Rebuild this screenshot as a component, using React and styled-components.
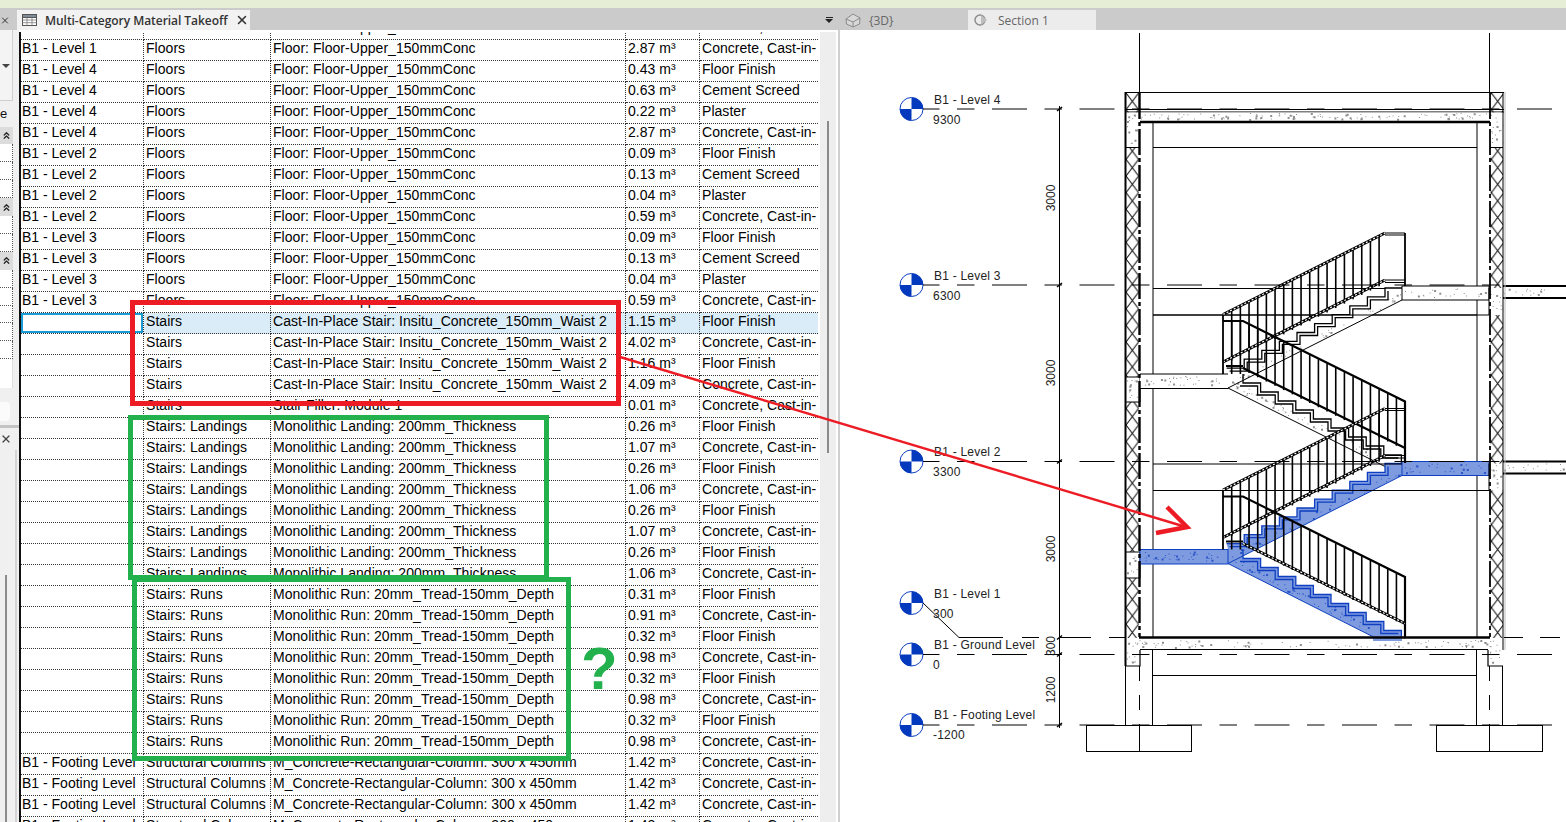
import styled, { createGlobalStyle } from 'styled-components'
import { X, ChevronsUp } from 'lucide-react'

const GlobalStyle = createGlobalStyle`
  html, body, #root {
    margin: 0;
    height: 100%;
    overflow: hidden;
    background: #fff;
  }
`

const Page = styled.div`
  position: relative;
  display: flex;
  flex-direction: column;
  width: 1566px;
  height: 822px;
  overflow: hidden;
  font-family: "Liberation Sans", Arial, sans-serif;
`

const TopStrip = styled.div`
  height: 8px;
  background: #e6efd6;
`

const TabBar = styled.div`
  display: flex;
  align-items: flex-end;
  height: 22px;
  background: #cbcbcb;
  font-family: "Open Sans", "Liberation Sans", sans-serif;
`

const DockClose = styled.div`
  display: flex;
  align-items: center;
  justify-content: flex-end;
  width: 17px;
  height: 20px;
  box-sizing: border-box;
  padding-right: 7px;
  color: #333;
`

const ActiveTab = styled.div`
  display: flex;
  align-items: center;
  width: 233px;
  height: 20px;
  box-sizing: border-box;
  padding-left: 5px;
  background: #f2f2f2;
  color: #333;
  font-size: 12px;
  font-weight: 600;
  letter-spacing: -0.05px;
  white-space: nowrap;
  svg:first-child {
    margin-right: 8px;
  }
  svg:last-child {
    margin-left: 7px;
  }
`

const TabSpacer = styled.div`
  width: 572px;
`

const TabMenu = styled.div`
  display: flex;
  flex-direction: column;
  align-items: center;
  justify-content: center;
  gap: 1px;
  width: 14px;
  height: 20px;
  &::before {
    content: '';
    width: 7px;
    height: 1px;
    background: #222;
  }
  &::after {
    content: '';
    border-left: 4px solid transparent;
    border-right: 4px solid transparent;
    border-top: 4px solid #222;
  }
`

const ViewTab = styled.div`
  display: flex;
  align-items: center;
  gap: ${(p) => p.$gap}px;
  width: ${(p) => p.$width}px;
  height: 20px;
  box-sizing: border-box;
  padding-left: ${(p) => p.$pad}px;
  background: ${(p) => (p.$open ? '#ececec' : 'transparent')};
  color: #666;
  font-size: 12px;
`

const Workspace = styled.div`
  display: flex;
  flex: 1;
  min-height: 0;
`

const Rail = styled.div`
  display: flex;
  flex-direction: column;
  flex: none;
  width: 19px;
  background: #f0f0f0;
`

const RailPanel = styled.div`
  display: flex;
  align-items: center;
  justify-content: center;
  width: 13px;
  height: 71px;
  box-sizing: border-box;
  padding-top: 2px;
  background: #f4f4f4;
  border-right: 1px solid #cfcfcf;
  border-bottom: 1px solid #cfcfcf;
  &::after {
    content: '';
    border-left: 4px solid transparent;
    border-right: 4px solid transparent;
    border-top: 4px solid #444;
  }
`

const RailLabel = styled.div`
  display: flex;
  align-items: center;
  width: 13px;
  height: 26px;
  font-size: 13px;
  color: #111;
`

const RailHeading = styled.div`
  display: flex;
  align-items: center;
  justify-content: center;
  width: 13px;
  height: 18px;
  background: #dcdcdc;
  color: #222;
`

const RailCell = styled.div`
  width: 13px;
  height: 18px;
  box-sizing: border-box;
  background: #fff;
  border-right: 1px dotted #555;
  border-bottom: 1px dotted #555;
`

const RailBlank = styled.div`
  width: 13px;
  height: 29px;
  box-sizing: border-box;
  background: #fff;
  border-right: 1px solid #dedede;
`

const RailSearch = styled.div`
  width: 10px;
  height: 19px;
  margin-top: 14px;
  background: #fbfbfb;
  border-radius: 0 4px 4px 0;
`

const RailSash = styled.div`
  height: 3px;
  margin-top: 4px;
  background: #c4c4c4;
`

const RailClose = styled.div`
  display: flex;
  align-items: center;
  height: 22px;
  padding-left: 0;
  color: #444;
`

const RailLower = styled.div`
  position: relative;
  flex: 1;
  display: flex;
  background: #f0f0f0;
`

const RailThumb = styled.div`
  width: 2px;
  height: 247px;
  margin: 125px 0 0 5px;
  background: #8c8c8c;
`

const RailEdge = styled.div`
  width: 2px;
  margin-left: 8px;
  background: #d4d4d4;
`

const Schedule = styled.div`
  flex: none;
  box-sizing: border-box;
  width: 801px;
  margin-top: 2px;
  overflow: hidden;
  border-left: 2px solid #111;
  background: #fff;
`

const RowStack = styled.div`
  margin-top: -13px;
`

const Row = styled.div`
  display: grid;
  grid-template-columns: 123px 127px 355px 74px 118px;
  height: 21px;
`

const Cell = styled.div`
  box-sizing: border-box;
  height: 21px;
  padding: 0 0 0 2px;
  overflow: hidden;
  white-space: nowrap;
  border-bottom: 1px dotted #333;
  border-right: 1px dotted #333;
  background: ${(p) => (p.$selected ? '#d9ecf8' : 'transparent')};
  box-shadow: ${(p) => (p.$focused ? 'inset 0 0 0 2px #1a9bd7' : 'none')};
  color: #000;
  font-size: 14px;
  letter-spacing: 0.04px;
  line-height: 17px;
  &:first-child {
    padding-left: 1px;
    letter-spacing: 0;
  }
  &:last-child {
    border-right: 0;
  }
`

const ScrollTrack = styled.div`
  flex: none;
  width: 16px;
  margin-top: 2px;
  background: #eeeeee;
`

const ScrollThumb = styled.div`
  width: 2px;
  height: 332px;
  margin: 89px 0 0 7px;
  background: #8a8a8a;
`

const Sash = styled.div`
  flex: none;
  width: 2px;
  margin: 0 1px 0 2px;
  background: #cfcfcf;
`

const DrawingPane = styled.div`
  flex: 1;
  margin-top: 2px;
  background: #fff;
  svg {
    display: block;
  }
`

const LevelText = styled.text`
  font-family: "Liberation Sans", Arial, sans-serif;
  font-size: 12px;
  letter-spacing: 0.22px;
  fill: #222;
`

const DimText = styled.text`
  font-family: "Liberation Sans", Arial, sans-serif;
  font-size: 12px;
  fill: #222;
`

const MarkBox = styled.div`
  position: absolute;
  left: ${(p) => p.$x}px;
  top: ${(p) => p.$y}px;
  width: ${(p) => p.$w}px;
  height: ${(p) => p.$h}px;
  box-sizing: border-box;
  border: 5px solid ${(p) => p.$color};
`

const QuestionMark = styled.div`
  position: absolute;
  left: 581px;
  top: 635px;
  color: #22b14c;
  font-size: 60px;
  font-weight: 700;
  line-height: 68px;
`

const ArrowLayer = styled.svg`
  position: absolute;
  left: 0;
  top: 0;
  pointer-events: none;
`

const FF = 'Floor Finish'
const CC = 'Concrete, Cast-in-'
const CS = 'Cement Screed'
const PL = 'Plaster'
const FLOOR = 'Floor: Floor-Upper_150mmConc'
const STAIR = 'Cast-In-Place Stair: Insitu_Concrete_150mm_Waist 2'
const LANDING = 'Monolithic Landing: 200mm_Thickness'
const RUN = 'Monolithic Run: 20mm_Tread-150mm_Depth'
const COLUMN = 'M_Concrete-Rectangular-Column: 300 x 450mm'

const row = (level, category, family, area, material) => ({ level, category, family, area, material })

const rows = [
  row('B1 - Level 1', 'Floors', FLOOR, '0.59', CC),
  row('B1 - Level 1', 'Floors', FLOOR, '2.87', CC),
  row('B1 - Level 4', 'Floors', FLOOR, '0.43', FF),
  row('B1 - Level 4', 'Floors', FLOOR, '0.63', CS),
  row('B1 - Level 4', 'Floors', FLOOR, '0.22', PL),
  row('B1 - Level 4', 'Floors', FLOOR, '2.87', CC),
  row('B1 - Level 2', 'Floors', FLOOR, '0.09', FF),
  row('B1 - Level 2', 'Floors', FLOOR, '0.13', CS),
  row('B1 - Level 2', 'Floors', FLOOR, '0.04', PL),
  row('B1 - Level 2', 'Floors', FLOOR, '0.59', CC),
  row('B1 - Level 3', 'Floors', FLOOR, '0.09', FF),
  row('B1 - Level 3', 'Floors', FLOOR, '0.13', CS),
  row('B1 - Level 3', 'Floors', FLOOR, '0.04', PL),
  row('B1 - Level 3', 'Floors', FLOOR, '0.59', CC),
  row('', 'Stairs', STAIR, '1.15', FF),
  row('', 'Stairs', STAIR, '4.02', CC),
  row('', 'Stairs', STAIR, '1.16', FF),
  row('', 'Stairs', STAIR, '4.09', CC),
  row('', 'Stairs', 'Stair Filler: Module 1', '0.01', CC),
  ...['0.26', '1.07', '0.26', '1.06', '0.26', '1.07', '0.26', '1.06'].map((a, i) =>
    row('', 'Stairs: Landings', LANDING, a, i % 2 ? CC : FF)),
  ...['0.31', '0.91', '0.32', '0.98', '0.32', '0.98', '0.32', '0.98'].map((a, i) =>
    row('', 'Stairs: Runs', RUN, a, i % 2 ? CC : FF)),
  row('B1 - Footing Level', 'Structural Columns', COLUMN, '1.42', CC),
  row('B1 - Footing Level', 'Structural Columns', COLUMN, '1.42', CC),
  row('B1 - Footing Level', 'Structural Columns', COLUMN, '1.42', CC),
  row('B1 - Footing Level', 'Structural Columns', COLUMN, '1.42', CC),
]

const SELECTED_ROW = 14

const levels = [
  { name: 'B1 - Level 4', value: '9300', y: 109, nameY: 104, valueY: 124, x2: 1558 },
  { name: 'B1 - Level 3', value: '6300', y: 285, nameY: 280, valueY: 300, x2: 1500 },
  { name: 'B1 - Level 2', value: '3300', y: 461.5, nameY: 456, valueY: 476, x2: 1500 },
  { name: 'B1 - Level 1', value: '300', y: 603, nameY: 598, valueY: 618, elbow: 637.5, x2: 1566 },
  { name: 'B1 - Ground Level', value: '0', y: 654.5, nameY: 649, valueY: 669, x2: 1558 },
  { name: 'B1 - Footing Level', value: '-1200', y: 725, nameY: 719, valueY: 739, x2: 1558 },
]

const BLUE = '#0d3fc0'
const BLUE_FILL = '#7f9bdf'

// small repeatable noise so the concrete looks the same on every render
function makeRandom(seed) {
  let s = seed
  return () => {
    s = (s * 16807) % 2147483647
    return s / 2147483647
  }
}

function speckPath(seed, count, place) {
  const rnd = makeRandom(seed)
  let d = ''
  for (let i = 0; i < count; i++) {
    const [x, y] = place(rnd)
    const size = rnd() > 0.75 ? 2 : 1
    d += `M${x.toFixed(1)} ${y.toFixed(1)}h${size}v${size}h-${size}z`
  }
  return d
}

function Concrete({ x, y, w, h, seed, count, color = '#8f8f8f' }) {
  const d = speckPath(seed, count, (rnd) => [x + rnd() * (w - 2), y + rnd() * (h - 2)])
  return <path d={d} fill={color} />
}

function points(list) {
  return list.map((p) => p.join(',')).join(' ')
}

function shift(list, dx, dy) {
  return list.map(([x, y]) => [x + dx, y + dy])
}

function LevelHead({ y }) {
  return (
    <g>
      <circle cx="911.5" cy={y} r="11.5" fill="#fff" stroke={BLUE} strokeWidth="1" />
      <path d={`M911.5 ${y}V${y - 11.5}A11.5 11.5 0 0 1 923 ${y}Z`} fill="#0339bd" />
      <path d={`M911.5 ${y}V${y + 11.5}A11.5 11.5 0 0 1 900 ${y}Z`} fill="#0339bd" />
    </g>
  )
}

function LevelMark({ level }) {
  const { name, value, y, nameY, valueY, elbow, x2 } = level
  return (
    <g>
      <LevelHead y={y} />
      {elbow ? (
        <g stroke="#000" fill="none">
          <path d={`M923 ${y}L959 ${elbow}`} />
          <line x1="959" y1={elbow} x2={x2} y2={elbow} strokeDasharray="44 19 17 20 32 18 17" />
        </g>
      ) : (
        <line
          x1="923"
          y1={y}
          x2={x2}
          y2={y}
          stroke="#000"
          strokeDasharray="35 17.5 17.5 17.5"
          strokeDashoffset="18.5"
        />
      )}
      <LevelText x="934" y={nameY}>{name}</LevelText>
      <LevelText x="933" y={valueY}>{value}</LevelText>
    </g>
  )
}

function Dimensions() {
  const ticks = [109, 285, 461.5, 637.5, 654.5, 725]
  const labels = [
    { text: '3000', y: 198 },
    { text: '3000', y: 373 },
    { text: '3000', y: 549 },
    { text: '300', y: 646 },
    { text: '1200', y: 690 },
  ]
  return (
    <g>
      <line x1="1059.5" y1="106" x2="1059.5" y2="728" stroke="#000" />
      {ticks.map((y) => (
        <path key={y} d={`M1057 ${y + 2}L1062 ${y - 2}`} stroke="#000" strokeWidth="1.4" />
      ))}
      {labels.map((l) => (
        <DimText
          key={l.y}
          textAnchor="middle"
          transform={`translate(1055 ${l.y}) rotate(-90)`}
        >
          {l.text}
        </DimText>
      ))}
    </g>
  )
}

function HatchedRail({ x1, y1, x2, y2 }) {
  return (
    <g>
      <line x1={x1} y1={y1} x2={x2} y2={y2} stroke="#000" strokeWidth="3" />
      <line x1={x1} y1={y1} x2={x2} y2={y2} stroke="#fff" strokeWidth="1.2" strokeDasharray="2 2" />
    </g>
  )
}

function Railing({ dy, hatchLower }) {
  const xs = []
  for (let x = 1231.7; x < 1402; x += 8.67) xs.push(x)
  return (
    <g>
      {xs.filter((x) => x < 1385).map((x) => {
        const top = 314.5 - 0.505 * (x - 1223)
        const bottom = 365 - 0.505 * (x - 1223)
        return <line key={x} x1={x} y1={top + dy} x2={x} y2={bottom + dy} stroke="#000" strokeWidth="1.6" />
      })}
      {xs.map((x) => {
        const top = x < 1243 ? 321 : 322 + 0.494 * (x - 1243)
        const bottom = x < 1243 ? 374 : 370 + 0.494 * (x - 1243)
        return <line key={x} x1={x} y1={top + dy} x2={x} y2={bottom + dy} stroke="#000" strokeWidth="1.6" />
      })}
      <HatchedRail x1={1223} y1={314.5 + dy} x2={1385} y2={233 + dy} />
      <HatchedRail x1={1223} y1={362 + dy} x2={1385} y2={280 + dy} />
      <g stroke="#000" fill="none">
        <path d={`M1385 ${233 + dy}H1405M1385 ${235 + dy}H1405M1385 ${280 + dy}H1405M1385 ${282.5 + dy}H1405`} />
        <path d={`M1405 ${233 + dy}V${286 + dy}M1223 ${314.5 + dy}V${374 + dy}`} strokeWidth="1.8" />
        <path d={`M1223 ${321 + dy}H1243L1405 ${401.5 + dy}V${463 + dy}`} strokeWidth="2.2" />
        <path d={`M1226 ${366 + dy}H1243`} strokeWidth="2" />
      </g>
      {hatchLower ? (
        <HatchedRail x1={1243} y1={368 + dy} x2={1405} y2={448 + dy} />
      ) : (
        <line x1="1243" y1={368 + dy} x2="1405" y2={448 + dy} stroke="#000" strokeWidth="2.2" />
      )}
    </g>
  )
}

function Flights({ dy, blue, cutY }) {
  const line = blue ? BLUE : '#000'
  const fill = blue ? BLUE_FILL : '#fff'
  const speck = blue ? '#2b55c8' : '#8f8f8f'

  const upper = [[1402, 288], [1385, 288]]
  let ux = 1385
  let uy = 288
  for (let k = 0; k < 9; k++) {
    uy += 8.9
    upper.push([ux, uy])
    ux -= 17.6
    upper.push([ux, uy])
  }

  const lower = [[1243, 374]]
  let lx = 1243
  let ly = 374
  for (let k = 0; k < 9; k++) {
    ly += 9
    lower.push([lx, ly])
    lx += 17.6
    lower.push([lx, ly])
  }
  lower.push([lx, 463])

  const upperShape = [...upper, [1228, 374], [1228, 388], [1402, 300]]
  const lowerEnd = cutY
    ? [[1402, cutY], [1228 + (cutY - 388) / 0.505, cutY]]
    : [[1402, 475]]
  const lowerShape = [[1228, 374], ...lower, ...lowerEnd, [1228, 388]]

  const upperSpecks = speckPath(11 + dy, 36, (rnd) => {
    const x = 1240 + rnd() * 160
    return [x, 300 + (1402 - x) * 0.505 - 2 - rnd() * 6]
  })
  const lowerSpecks = speckPath(29 + dy, 55, (rnd) => {
    const x = 1232 + rnd() * 140
    return [x, 388 + (x - 1228) * 0.5 - 2 - rnd() * 8]
  })

  return (
    <g transform={`translate(0 ${dy})`}>
      <polygon points={points(upperShape)} fill={fill} />
      <polygon points={points(lowerShape)} fill={fill} />
      <path d={upperSpecks} fill={speck} />
      <path d={lowerSpecks} fill={speck} />
      <g fill="none" stroke={line} strokeWidth="1.3">
        <polyline points={points(upper)} />
        <polyline points={points(shift(upper, 3, 3).slice(1))} />
        <polyline points={points(lower)} />
        <polyline points={points(shift(lower, -3, 3).slice(1, -1))} />
      </g>
      <g fill="none" stroke={line} strokeWidth="1">
        <line x1="1402" y1="300" x2="1228" y2="388" />
        <line x1="1228" y1="388" x2={cutY ? 1228 + (cutY - 388) / 0.505 : 1402} y2={cutY || 475} />
      </g>
      <rect x="1140" y="374" width="88" height="14.5" fill={fill} stroke={blue ? BLUE : 'none'} />
      <Concrete x={1145} y={376} w={80} h={11} seed={53 + dy} count={34} color={speck} />
      {!blue && <path d="M1140 374H1228M1140 388.5H1228" stroke="#000" strokeWidth="1.2" />}
    </g>
  )
}

function FloorSlab({ dy, blue }) {
  return (
    <g>
      <rect
        x="1402"
        y={286 + dy}
        width="87"
        height="14"
        fill={blue ? BLUE_FILL : '#fff'}
        stroke={blue ? BLUE : '#000'}
      />
      <Concrete x={1405} y={288 + dy} w={82} h={11} seed={71 + dy} count={blue ? 26 : 22} color={blue ? '#2b55c8' : '#8f8f8f'} />
      <rect x="1489" y={288 + dy} width="14" height="27" fill="#fff" />
      <Concrete x={1490} y={289 + dy} w={13} h={25} seed={83 + dy} count={11} />
      <path d={`M1489 ${288 + dy}V${315 + dy}`} stroke="#000" />
      <Concrete x={1504} y={288 + dy} w={62} h={9} seed={97 + dy} count={14} />
      <path d={`M1503 ${286 + dy}H1566M1503 ${298 + dy}H1566`} stroke="#000" strokeWidth="2" />
      <path d={`M1153 ${288.5 + dy}H${blue ? 1402 : 1385}M1153 ${315 + dy}H1489`} stroke="#000" />
    </g>
  )
}

function Building() {
  return (
    <g>
      <defs>
        <pattern id="wallHatch" x="1126" y="93" width="12.6" height="16.6" patternUnits="userSpaceOnUse">
          <path d="M0 0L12.6 16.6M12.6 0L0 16.6" stroke="#000" strokeWidth="1" fill="none" />
        </pattern>
      </defs>

      <path
        d="M1139.5 33V92M1489.5 33V92"
        stroke="#000"
      />

      <rect x="1126" y="93" width="12.6" height="545" fill="url(#wallHatch)" />
      <rect x="1490.5" y="93" width="12.6" height="545" fill="url(#wallHatch)" />

      <path d="M1125 92.5H1504M1125 109.5H1504M1125 112H1504" stroke="#000" strokeWidth="1.1" fill="none" />
      <rect x="1126" y="112.5" width="14" height="35" fill="#fff" />
      <rect x="1490" y="112.5" width="13" height="35" fill="#fff" />
      <rect x="1140" y="112.5" width="350" height="9" fill="#fff" />
      <Concrete x={1141} y={113} w={349} h={8} seed={7} count={110} />
      <Concrete x={1127} y={114} w={12} h={32} seed={17} count={14} />
      <Concrete x={1491} y={114} w={12} h={32} seed={23} count={14} />
      <path d="M1140 122H1490" stroke="#000" strokeWidth="2.4" />
      <path d="M1126 147.5H1139M1490 147.5H1503M1153 147.5H1477" stroke="#000" fill="none" />

      <path d="M1153 122V637M1477 122V637M1153 315H1477" stroke="#000" fill="none" />

      <rect x="1126" y="377" width="14" height="25" fill="#fff" />
      <Concrete x={1127} y={379} w={12} h={22} seed={31} count={11} />
      <rect x="1126" y="552" width="14" height="26" fill="#fff" />
      <Concrete x={1127} y={554} w={12} h={23} seed={37} count={11} />
      <path d="M1126 377H1140V402H1126M1126 552H1140V578H1126" stroke="#000" fill="none" />

      <Flights dy={0} />
      <Flights dy={175.5} blue cutY={462.5} />
      <FloorSlab dy={0} />
      <FloorSlab dy={175.5} blue />
      <Railing dy={0} />
      <Railing dy={175.5} hatchLower />

      <rect x="1126" y="638.5" width="377" height="10.5" fill="#fff" />
      <Concrete x={1128} y={640} w={372} h={9} seed={41} count={95} />
      <rect x="1373" y="638" width="29" height="3" fill={BLUE_FILL} />
      <rect x="1126" y="649" width="14" height="17" fill="#fff" />
      <rect x="1489" y="649" width="14" height="17" fill="#fff" />
      <Concrete x={1127} y={650} w={12} h={15} seed={43} count={7} />
      <Concrete x={1490} y={650} w={12} h={15} seed={47} count={7} />
      <path d="M1139 637.5H1490" stroke="#000" strokeWidth="2.4" />
      <path d="M1140 649.5H1488" stroke="#000" fill="none" />
      <path d="M1126 666H1140V650M1488 650V666H1503" stroke="#000" strokeWidth="1.2" fill="none" />

      <path d="M1125.5 92V666" stroke="#000" strokeWidth="2" />
      <path d="M1139.5 93V637" stroke="#000" strokeWidth="2.4" strokeDasharray="26 3 4 3" />
      <path d="M1490 93V637" stroke="#000" strokeWidth="1.8" strokeDasharray="26 3 4 3" />
      <path d="M1503 92V650" stroke="#000" strokeWidth="1" />
      <path d="M1505 92V650" stroke="#bbb" strokeWidth="1" />

      <path
        d="M1125.5 666V725M1152.5 649V725M1476.5 649V725M1502.5 666V725M1152.5 675.5H1476.5"
        stroke="#000"
        fill="none"
      />
      <path d="M1139.5 666V725M1489.5 666V725" stroke="#000" strokeDasharray="15 14" fill="none" />
      <path d="M1139.5 725V751M1489.5 725V751" stroke="#000" fill="none" />
      <rect x="1086.5" y="725.5" width="105" height="26" fill="none" stroke="#000" />
      <rect x="1436.5" y="725.5" width="106" height="26" fill="none" stroke="#000" />
    </g>
  )
}

function TableIcon() {
  return (
    <svg width="15" height="12" viewBox="0 0 15 12">
      <rect x="0.5" y="0.5" width="14" height="11" fill="#fff" stroke="#555" />
      <rect x="0.5" y="0.5" width="14" height="3" fill="#7f8c99" stroke="#555" />
      <path d="M0.5 6H14.5M0.5 8.7H14.5M5 3.5V11.5M10 3.5V11.5" stroke="#7b7b7b" strokeWidth="0.8" fill="none" />
    </svg>
  )
}

function HouseIcon() {
  return (
    <svg width="16" height="15" viewBox="0 0 16 15">
      <path d="M1 6L8 1L15 5L14.5 11L8 14L1.5 11Z" fill="#d8d8d8" stroke="#8a8a8a" />
      <path d="M1 6L8 9L15 5M8 9V14" fill="none" stroke="#8a8a8a" />
    </svg>
  )
}

function SectionIcon() {
  return (
    <svg width="14" height="14" viewBox="0 0 14 14">
      <circle cx="6" cy="7" r="5" fill="none" stroke="#8a8a8a" strokeWidth="1.4" />
      <path d="M7 2L13 7L7 12Z" fill="#bdbdbd" />
    </svg>
  )
}

function App() {
  return (
    <Page>
      <GlobalStyle />
      <TopStrip />
      <TabBar>
        <DockClose><X size={13} strokeWidth={2.4} /></DockClose>
        <ActiveTab>
          <TableIcon />
          Multi-Category Material Takeoff
          <X size={14} strokeWidth={2.6} />
        </ActiveTab>
        <TabSpacer />
        <TabMenu />
        <ViewTab $width={132} $pad={9} $gap={8}>
          <HouseIcon />
          {'{3D}'}
        </ViewTab>
        <ViewTab $width={128} $pad={6} $gap={10} $open>
          <SectionIcon />
          Section 1
        </ViewTab>
      </TabBar>
      <Workspace>
        <Rail>
          <RailPanel />
          <RailLabel>e</RailLabel>
          <RailHeading><ChevronsUp size={11} strokeWidth={2.6} /></RailHeading>
          <RailCell /><RailCell /><RailCell />
          <RailHeading><ChevronsUp size={11} strokeWidth={2.6} /></RailHeading>
          <RailCell /><RailCell />
          <RailHeading><ChevronsUp size={11} strokeWidth={2.6} /></RailHeading>
          <RailCell /><RailCell /><RailCell /><RailCell /><RailCell />
          <RailBlank />
          <RailSearch />
          <RailSash />
          <RailClose><X size={12} strokeWidth={2.4} /></RailClose>
          <RailLower>
            <RailThumb />
            <RailEdge />
          </RailLower>
        </Rail>
        <Schedule>
          <RowStack>
            {rows.map((r, i) => (
              <Row key={i}>
                <Cell $focused={i === SELECTED_ROW}>{r.level}</Cell>
                <Cell $selected={i === SELECTED_ROW}>{r.category}</Cell>
                <Cell $selected={i === SELECTED_ROW}>{r.family}</Cell>
                <Cell $selected={i === SELECTED_ROW}>{r.area} m³</Cell>
                <Cell $selected={i === SELECTED_ROW}>{r.material}</Cell>
              </Row>
            ))}
          </RowStack>
        </Schedule>
        <ScrollTrack>
          <ScrollThumb />
        </ScrollTrack>
        <Sash />
        <DrawingPane>
          <svg width="725" height="790" viewBox="841 32 725 790">
            <Building />
            {levels.map((l) => <LevelMark key={l.name} level={l} />)}
            <Dimensions />
          </svg>
        </DrawingPane>
      </Workspace>

      <MarkBox $x={130} $y={300} $w={491} $h={106} $color="#ed1c24" />
      <MarkBox $x={128} $y={415} $w={421} $h={165} $color="#22b14c" />
      <MarkBox $x={132} $y={577} $w={439} $h={184} $color="#22b14c" />
      <QuestionMark>?</QuestionMark>
      <ArrowLayer width="1566" height="822" viewBox="0 0 1566 822">
        <path d="M620 357L1186 527" stroke="#ed1c24" strokeWidth="2.4" fill="none" />
        <path d="M1167 507L1187 527L1156 533" stroke="#ed1c24" strokeWidth="4.5" fill="none" />
      </ArrowLayer>
    </Page>
  )
}

export default App
